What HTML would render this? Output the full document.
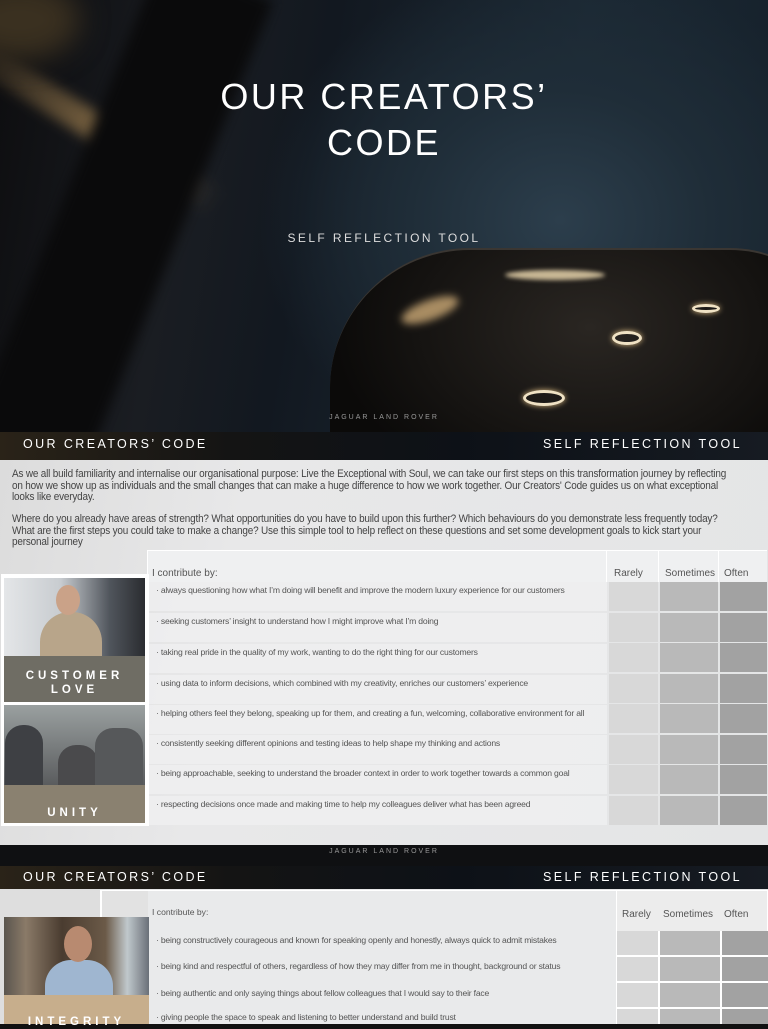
<!DOCTYPE html>
<html><head><meta charset="utf-8"><style>
*{margin:0;padding:0;box-sizing:border-box}
body{width:768px;height:1024px;overflow:hidden;background:#111;font-family:"Liberation Sans",sans-serif;position:relative}
.abs{position:absolute}
.hero{left:0;top:0;width:768px;height:432px;background:
radial-gradient(ellipse 300px 260px at 560px 220px,#2c3e4c 0%,#1f2d38 50%,rgba(20,28,36,0) 100%),
linear-gradient(100deg,#0d0d0f 0%,#1a1d22 25%,#121820 40%,#1b2833 70%,#15202a 100%);overflow:hidden}
.streak{background:linear-gradient(90deg,rgba(0,0,0,0),rgba(190,150,90,.55),rgba(0,0,0,0));transform:rotate(32deg);filter:blur(6px)}
.mirror{left:330px;top:248px;width:520px;height:260px;border-radius:140px 120px 0 0;background:radial-gradient(ellipse at 50% 30%,#2a2622,#0b0a09 70%);border-top:2px solid #3a3632}
.dot{border:3px solid #f0e2c4;border-radius:50%;box-shadow:0 0 6px #d8b880}
.t1{left:0;width:768px;text-align:center;color:#fff;font-size:36px;letter-spacing:2.5px;line-height:46px}
.cap{color:#fff;font-size:12.5px;letter-spacing:2.4px}
.band{left:0;width:768px;background:linear-gradient(90deg,#2a2318 0%,#141414 30%,#0d1117 60%,#161b22 100%)}
.light{left:0;width:768px;background:linear-gradient(100deg,#dcdcdc 0%,#e8e8e9 30%,#e4e5e6 100%)}
.p{left:12px;color:#444;font-size:11px;line-height:11.5px;white-space:nowrap;letter-spacing:-.2px;transform:scaleX(.905);transform-origin:0 0}
.row{left:148px;height:29px;background:rgba(238,239,240,.85);color:#555;font-size:8.6px;padding:3px 0 0 8px;white-space:nowrap;letter-spacing:-.2px}
.c{height:29px}
.r{background:#d8d8d8}.s{background:#b9b9b9}.o{background:#a2a2a2}
.hd{color:#555;font-size:10px}
.lbl{color:#fff;font-size:11.5px;font-weight:bold;letter-spacing:4px;text-align:center;line-height:14px}
</style></head><body>
<div class="abs hero">
 <div class="abs streak" style="left:-60px;top:110px;width:300px;height:28px"></div>
 <div class="abs" style="left:-40px;top:-20px;width:120px;height:80px;border-radius:50%;background:#3a3020;filter:blur(14px)"></div>
 <div class="abs" style="left:60px;top:-40px;width:120px;height:520px;background:#0a0a0b;transform:rotate(22deg);filter:blur(6px)"></div>
 <div class="abs mirror"></div>
 <div class="abs dot" style="left:612px;top:331px;width:30px;height:14px"></div>
 <div class="abs dot" style="left:523px;top:390px;width:42px;height:16px"></div>
 <div class="abs dot" style="left:692px;top:304px;width:28px;height:9px"></div>
 <div class="abs" style="left:505px;top:270px;width:100px;height:10px;background:#c9b895;border-radius:50%;filter:blur(2px)"></div>
 <div class="abs" style="left:400px;top:300px;width:60px;height:20px;background:#a88c62;border-radius:50%;filter:blur(4px);transform:rotate(-20deg)"></div>
 <div class="abs t1" style="top:74px">OUR CREATORS’</div>
 <div class="abs t1" style="top:120px">CODE</div>
 <div class="abs cap" style="left:0;width:768px;text-align:center;top:231px;font-size:12px;color:#ddd">SELF REFLECTION TOOL</div>
 <div class="abs" style="left:0;width:768px;text-align:center;top:414px;font-size:7px;letter-spacing:2px;color:#999">JAGUAR LAND ROVER</div>
</div>

<div class="abs band" style="top:432px;height:28px"></div>
<div class="abs cap" style="left:23px;top:437px">OUR CREATORS’ CODE</div>
<div class="abs cap" style="left:543px;top:437px">SELF REFLECTION TOOL</div>
<div class="abs light" style="top:460px;height:385px"></div>
<div class="abs p" style="top:469px">As we all build familiarity and internalise our organisational purpose: Live the Exceptional with Soul, we can take our first steps on this transformation journey by reflecting<br>on how we show up as individuals and the small changes that can make a huge difference to how we work together. Our Creators' Code guides us on what exceptional<br>looks like everyday.</div>
<div class="abs p" style="top:514px">Where do you already have areas of strength? What opportunities do you have to build upon this further? Which behaviours do you demonstrate less frequently today?<br>What are the first steps you could take to make a change? Use this simple tool to help reflect on these questions and set some development goals to kick start your<br>personal journey</div>

<div class="abs" style="left:147px;top:550px;width:620px;height:32px;background:rgba(240,241,242,.9);border-top:1px solid #fff;border-left:1px solid #fff"></div>
<div class="abs hd" style="left:152px;top:568px">I contribute by:</div>
<div class="abs hd" style="left:614px;top:568px">Rarely</div>
<div class="abs hd" style="left:665px;top:568px">Sometimes</div>
<div class="abs hd" style="left:724px;top:568px">Often</div>
<div class="abs" style="left:606px;top:550px;width:1px;height:32px;background:#fff"></div>
<div class="abs" style="left:658px;top:550px;width:1px;height:32px;background:#fff"></div>
<div class="abs" style="left:718px;top:550px;width:1px;height:32px;background:#fff"></div>

<div class="abs row" style="top:582px;width:459px">· always questioning how what I’m doing will benefit and improve the modern luxury experience for our customers</div>
<div class="abs row" style="top:613px;width:459px">· seeking customers’ insight to understand how I might improve what I’m doing</div>
<div class="abs row" style="top:644px;width:459px">· taking real pride in the quality of my work, wanting to do the right thing for our customers</div>
<div class="abs row" style="top:675px;width:459px">· using data to inform decisions, which combined with my creativity, enriches our customers’ experience</div>
<div class="abs row" style="top:705px;width:459px">· helping others feel they belong, speaking up for them, and creating a fun, welcoming, collaborative environment for all</div>
<div class="abs row" style="top:735px;width:459px">· consistently seeking different opinions and testing ideas to help shape my thinking and actions</div>
<div class="abs row" style="top:765px;width:459px">· being approachable, seeking to understand the broader context in order to work together towards a common goal</div>
<div class="abs row" style="top:796px;width:459px">· respecting decisions once made and making time to help my colleagues deliver what has been agreed</div>
<div class="abs" style="left:609px;top:582px;width:158px;height:243px;overflow:hidden">
 <div style="display:grid;grid-template-columns:49px 58px 47px;gap:1.5px 2px">
  <div class="c r"></div><div class="c s"></div><div class="c o"></div>
  <div class="c r"></div><div class="c s"></div><div class="c o"></div>
  <div class="c r"></div><div class="c s"></div><div class="c o"></div>
  <div class="c r"></div><div class="c s"></div><div class="c o"></div>
  <div class="c r"></div><div class="c s"></div><div class="c o"></div>
  <div class="c r"></div><div class="c s"></div><div class="c o"></div>
  <div class="c r"></div><div class="c s"></div><div class="c o"></div>
  <div class="c r"></div><div class="c s"></div><div class="c o"></div>
 </div>
</div>

<div class="abs" style="left:1px;top:574px;width:148px;height:252px;background:#fff"></div>
<div class="abs" style="left:4px;top:578px;width:141px;height:78px;background:linear-gradient(90deg,#e4e6e8 0%,#c8ccd0 40%,#50555c 75%,#2a2c30 100%)"></div>
<div class="abs" style="left:40px;top:612px;width:62px;height:44px;border-radius:30px 30px 0 0;background:#b8a58a"></div>
<div class="abs" style="left:56px;top:585px;width:24px;height:30px;border-radius:50%;background:#caa288"></div>
<div class="abs" style="left:4px;top:656px;width:141px;height:46px;background:#6f6d64"></div>
<div class="abs lbl" style="left:4px;top:669px;width:141px">CUSTOMER<br>LOVE</div>
<div class="abs" style="left:4px;top:705px;width:141px;height:80px;background:linear-gradient(180deg,#9aa0a0,#5a5c5e)"></div>
<div class="abs" style="left:5px;top:725px;width:38px;height:60px;border-radius:18px 18px 0 0;background:#3e4044"></div>
<div class="abs" style="left:58px;top:745px;width:40px;height:40px;border-radius:18px 18px 0 0;background:#4a4a4c"></div>
<div class="abs" style="left:95px;top:728px;width:48px;height:57px;border-radius:18px 18px 0 0;background:#56585a"></div>
<div class="abs" style="left:4px;top:785px;width:141px;height:38px;background:#8a8170"></div>
<div class="abs lbl" style="left:4px;top:806px;width:141px">UNITY</div>

<div class="abs" style="left:0;top:845px;width:768px;height:21px;background:#0f1012"></div>
<div class="abs" style="left:0;width:768px;text-align:center;top:848px;font-size:7px;letter-spacing:2px;color:#999">JAGUAR LAND ROVER</div>
<div class="abs band" style="top:866px;height:23px"></div>
<div class="abs cap" style="left:23px;top:870px">OUR CREATORS’ CODE</div>
<div class="abs cap" style="left:543px;top:870px">SELF REFLECTION TOOL</div>
<div class="abs light" style="top:889px;height:135px"></div>
<div class="abs" style="left:100px;top:890px;width:668px;height:134px;background:#fff"></div>
<div class="abs" style="left:102px;top:891px;width:514px;height:133px;background:#e9eaeb"></div>
<div class="abs" style="left:102px;top:891px;width:46px;height:133px;background:#e2e2e2"></div>
<div class="abs" style="left:617px;top:891px;width:150px;height:40px;background:#ececec"></div>
<div class="abs hd" style="left:152px;top:907px;font-size:8.6px">I contribute by:</div>
<div class="abs hd" style="left:622px;top:909px">Rarely</div>
<div class="abs hd" style="left:663px;top:909px">Sometimes</div>
<div class="abs hd" style="left:724px;top:909px">Often</div>
<div class="abs row" style="top:931px;width:468px;height:25px;background:#e9eaeb;padding-top:4px">· being constructively courageous and known for speaking openly and honestly, always quick to admit mistakes</div>
<div class="abs row" style="top:957px;width:468px;height:25px;background:#e9eaeb;padding-top:4px">· being kind and respectful of others, regardless of how they may differ from me in thought, background or status</div>
<div class="abs row" style="top:984px;width:468px;height:24px;background:#e9eaeb;padding-top:4px">· being authentic and only saying things about fellow colleagues that I would say to their face</div>
<div class="abs row" style="top:1009px;width:468px;height:15px;background:#e9eaeb;padding-top:3px">· giving people the space to speak and listening to better understand and build trust</div>
<div class="abs" style="left:617px;top:931px;width:151px;height:93px;overflow:hidden">
 <div style="display:grid;grid-template-columns:41px 60px 46px;gap:2px 2px">
  <div class="c r" style="height:24px"></div><div class="c s" style="height:24px"></div><div class="c o" style="height:24px"></div>
  <div class="c r" style="height:24px"></div><div class="c s" style="height:24px"></div><div class="c o" style="height:24px"></div>
  <div class="c r" style="height:24px"></div><div class="c s" style="height:24px"></div><div class="c o" style="height:24px"></div>
  <div class="c r" style="height:24px"></div><div class="c s" style="height:24px"></div><div class="c o" style="height:24px"></div>
 </div>
</div>
<div class="abs" style="left:0;top:889px;width:100px;height:135px;background:#dedede"></div>
<div class="abs" style="left:4px;top:917px;width:145px;height:78px;background:linear-gradient(90deg,#5a554e 0%,#8a7a68 15%,#4a3c30 40%,#6b5a48 70%,#c0c8cc 85%,#6a7078 100%)"></div>
<div class="abs" style="left:45px;top:960px;width:68px;height:35px;border-radius:26px 26px 0 0;background:#9fb6d0"></div>
<div class="abs" style="left:64px;top:926px;width:28px;height:36px;border-radius:50%;background:#b88a70"></div>
<div class="abs" style="left:4px;top:995px;width:145px;height:29px;background:#c7ae8c"></div>
<div class="abs lbl" style="left:4px;top:1015px;width:145px">INTEGRITY</div>
</body></html>
